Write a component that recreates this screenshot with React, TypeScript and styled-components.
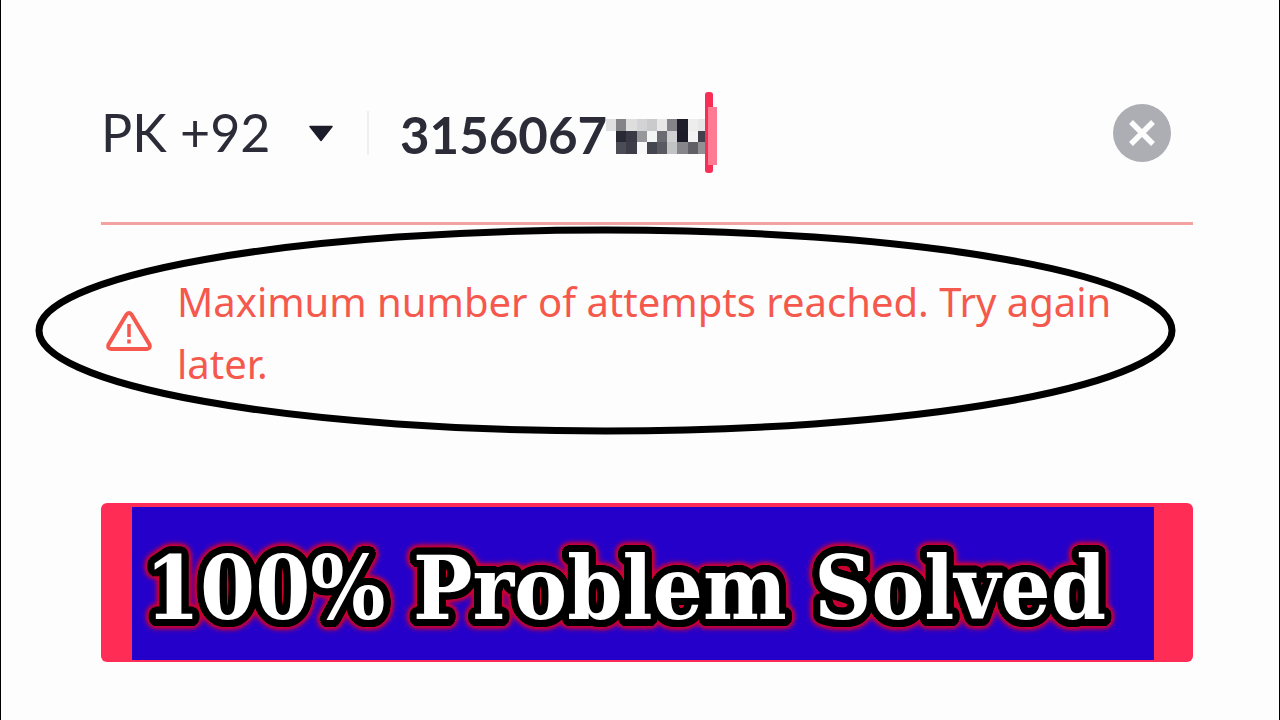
import React, { useState } from "react";
import styled, { createGlobalStyle } from "styled-components";

const GlobalStyle = createGlobalStyle`
  *, *::before, *::after { box-sizing: border-box; }
  body { margin: 0; background: #fdfdfd; }
`;

const Page = styled.main`
  min-height: 100vh;
  padding: 84px 86px 56px 100px;
  border: solid #000;
  border-width: 0 1px;
  background: #fdfdfd;
  color: #23232f;
  font-family: Lato, "Liberation Sans", sans-serif;
`;

const PhoneRow = styled.div`
  display: flex;
  align-items: center;
  height: 141px;
  padding: 0 21px 41px 0;
  border-bottom: 3px solid #f2a3a0;
`;

const CountryButton = styled.button`
  display: flex;
  align-items: center;
  justify-content: space-between;
  width: 233px;
  padding: 0 0 2px;
  border: 0;
  background: none;
  color: #2c2c38;
  font: 400 52px/60px Lato, "Liberation Sans", sans-serif;
  white-space: nowrap;
`;

const Arrow = styled.svg`
  margin-top: 4px;
`;

const Divider = styled.span`
  width: 2px;
  height: 44px;
  margin: 0 31px 0 33px;
  background: #efeff0;
`;

const NumberInput = styled.input`
  width: 206px;
  padding: 4px 0 0;
  border: 0;
  outline: 0;
  background: none;
  color: #2c2c38;
  font: 700 51px/60px Lato, "Liberation Sans", sans-serif;
`;

const Masked = styled.svg`
  flex: none;
  margin-top: 8px;
`;

const Caret = styled.svg`
  flex: none;
  margin-left: -4px;
`;

const ClearButton = styled.button`
  display: flex;
  margin-left: auto;
  padding: 0;
  border: 0;
  background: none;
`;

const ErrorMessage = styled.section`
  position: relative;
  display: flex;
  align-items: center;
  gap: 24px;
  padding: 46px 60px 51px 4px;
  color: #f5584c;
`;

const WarningIcon = styled.svg`
  flex: none;
  margin-bottom: 4px;
`;

const ErrorText = styled.p`
  margin: 0;
  font-family: "Noto Sans", sans-serif;
  font-size: 40px;
  line-height: 62px;
`;

const Callout = styled.svg`
  position: absolute;
  top: 5px;
  left: -62px;
  width: calc(100% + 41px);
  height: calc(100% - 20px);
  overflow: visible;
  pointer-events: none;
`;

const SubmitButton = styled.button`
  display: block;
  width: 100%;
  margin-top: 57px;
  padding: 4px 39px 2px 31px;
  border: 0;
  border-radius: 6px;
  background: #ff2d55;
`;

const Banner = styled.span`
  display: block;
  padding: 11px 13px 2px;
  background: #2500cb;
  text-align: left;
`;

const ring = (radius: number, steps: number) =>
  Array.from({ length: steps }, (_, i) => {
    const angle = (i / steps) * Math.PI * 2;
    return `${(Math.cos(angle) * radius).toFixed(1)}px ${(Math.sin(angle) * radius).toFixed(1)}px 0 #000`;
  });

const OUTLINE = [...ring(4, 12), ...ring(7, 32)].join(", ");

const BannerText = styled.span`
  display: block;
  color: #fff;
  font: 700 88px/140px "DejaVu Serif Condensed", "DejaVu Serif", serif;
  font-stretch: condensed;
  white-space: nowrap;
  text-shadow: ${OUTLINE};
  filter: drop-shadow(0 0 2px #d0002e) drop-shadow(0 0 2px #d0002e) drop-shadow(0 0 2px #d0002e);
`;

const SHADES = [
  ["#dfdfe1", "#838388", "#dededf", "#d3d3d5", "#cacacc", "#e8e8e9", "#858589", "#1d1d2b", "#ededee", "#e6e6e7"],
  ["", "#292936", "#393945", "#97979b", "#f4f5f5", "#6b6b71", "#d0d0d2", "#1b1b29", "#f3f3f4", "#41414d"],
  ["", "#4c4c56", "#3d3d4a", "#f8f8f8", "#454550", "#595961", "#c2c3c5", "#85858a", "#606066", "#919195"],
];

function MaskedDigits() {
  return (
    <Masked width="102" height="35" viewBox="0 0 100 30" preserveAspectRatio="none" shapeRendering="crispEdges" aria-hidden="true">
      {SHADES.map((row, y) =>
        row.map((fill, x) =>
          fill ? <rect key={`${x}-${y}`} x={x * 10} y={y * 10} width="10" height="10" fill={fill} /> : null
        )
      )}
    </Masked>
  );
}

export default function App() {
  const [number, setNumber] = useState("3156067");
  return (
    <>
      <GlobalStyle />
      <Page>
        <PhoneRow>
          <CountryButton type="button">
            PK +92
            <Arrow width="26" height="17" viewBox="0 0 26 17" aria-hidden="true">
              <path d="M2 1.5h22L13 15.5z" fill="#1c1c2a" stroke="#1c1c2a" strokeWidth="1.5" strokeLinejoin="round" />
            </Arrow>
          </CountryButton>
          <Divider />
          <NumberInput aria-label="Phone number" value={number} onChange={(e) => setNumber(e.target.value)} />
          <MaskedDigits />
          <Caret width="13" height="82" viewBox="0 0 13 82" aria-hidden="true">
            <rect x="1" y="0" width="8" height="81" rx="3" fill="#f72f57" />
            <rect x="4" y="15" width="9" height="58" fill="#ff7b94" />
          </Caret>
          <ClearButton type="button" aria-label="Clear">
            <svg width="60" height="60" viewBox="0 0 60 60" aria-hidden="true">
              <circle cx="30" cy="30" r="29" fill="#adaeb3" />
              <path d="M19 19l22 22M41 19l-22 22" stroke="#fdfdfd" strokeWidth="5.5" />
            </svg>
          </ClearButton>
        </PhoneRow>
        <ErrorMessage role="alert">
          <WarningIcon width="48" height="42" viewBox="0 0 48 42" fill="none" stroke="#f5584c" aria-hidden="true">
            <path d="M21.5 4.5Q24 1.5 26.5 4.5L44.5 34.5Q46 38.5 42 39H6Q2 38.5 3.5 34.5z" strokeWidth="4" strokeLinejoin="round" />
            <path d="M24 14v13M24 29.5v4" strokeWidth="3.5" />
          </WarningIcon>
          <ErrorText>Maximum number of attempts reached. Try again later.</ErrorText>
          <Callout aria-hidden="true">
            <ellipse cx="50%" cy="50%" rx="50%" ry="50%" fill="none" stroke="#000" strokeWidth="7" />
          </Callout>
        </ErrorMessage>
        <SubmitButton type="button">
          <Banner>
            <BannerText>100% Problem Solved</BannerText>
          </Banner>
        </SubmitButton>
      </Page>
    </>
  );
}
